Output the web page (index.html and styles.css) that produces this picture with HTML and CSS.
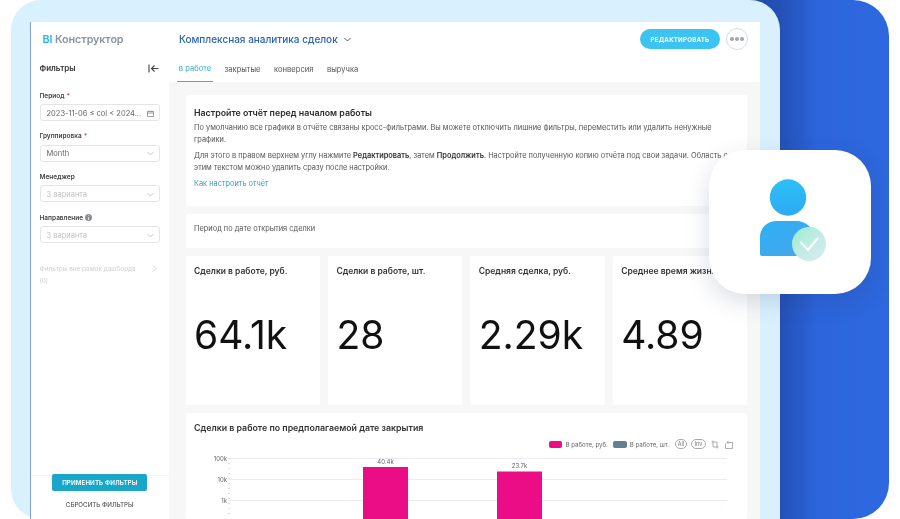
FILE: index.html
```html
<!DOCTYPE html>
<html lang="ru">
<head>
<meta charset="utf-8">
<title>BI Конструктор</title>
<link rel="stylesheet" href="styles.css">
</head>
<body>
<div class="stage">
  <div class="frame">
    <div class="app">
      <aside class="sidebar">
        <div class="sidebar-body">
          <div class="logo"><span class="logo-bi">BI</span> Конструктор</div>
          <div class="filters-head">
            <span>Фильтры</span>
            <svg class="collapse" viewBox="0 0 11 9" width="11" height="9"><path d="M1 .5v8M10.500 4.500H3.500M6.500 1.500l-3 3 3 3" fill="none" stroke="#444" stroke-width="1.100"/></svg>
          </div>
          <div class="fields">
            <div class="field">
              <div class="label">Период<span class="req">*</span></div>
              <div class="input"><span class="input-text">2023-11-06 ≤ col &lt; 2024...</span>
                <svg viewBox="0 0 7 7" width="7" height="7"><path d="M.5 1.500h6v5h-6zM.5 3h6M2 .5v1M5 .5v1" fill="none" stroke="#777" stroke-width=".7"/></svg></div>
            </div>
            <div class="field">
              <div class="label">Группировка<span class="req">*</span></div>
              <div class="input"><span class="input-text">Month</span>
                <svg viewBox="0 0 7 5" width="7" height="5"><path d="M.5 1l3 3 3-3" fill="none" stroke="#bbb" stroke-width=".8"/></svg></div>
            </div>
            <div class="field">
              <div class="label">Менеджер</div>
              <div class="input"><span class="input-text muted">3 варианта</span>
                <svg viewBox="0 0 7 5" width="7" height="5"><path d="M.5 1l3 3 3-3" fill="none" stroke="#bbb" stroke-width=".8"/></svg></div>
            </div>
            <div class="field">
              <div class="label">Направление <span class="info">i</span></div>
              <div class="input"><span class="input-text muted">3 варианта</span>
                <svg viewBox="0 0 7 5" width="7" height="5"><path d="M.5 1l3 3 3-3" fill="none" stroke="#bbb" stroke-width=".8"/></svg></div>
            </div>
          </div>
          <div class="outside">
            <span>Фильтры вне рамок дашборда (0)</span>
            <svg viewBox="0 0 5 7" width="5" height="7"><path d="M1 .5l3 3-3 3" fill="none" stroke="#c4c4c4" stroke-width=".8"/></svg>
          </div>
        </div>
        <div class="sidebar-foot">
          <div class="btn-apply">ПРИМЕНИТЬ ФИЛЬТРЫ</div>
          <div class="btn-reset">СБРОСИТЬ ФИЛЬТРЫ</div>
        </div>
      </aside>
      <main class="main">
        <header class="topbar">
          <div class="title">Комплексная аналитика сделок
            <svg viewBox="0 0 7 5" width="7" height="5"><path d="M.5 1l3 3 3-3" fill="none" stroke="#555" stroke-width="1"/></svg></div>
          <div class="actions">
            <div class="btn-edit">РЕДАКТИРОВАТЬ</div>
            <div class="btn-more"><i></i><i></i><i></i></div>
          </div>
        </header>
        <nav class="tabs">
          <span class="tab tab-active">в работе</span>
          <span class="tab">закрытые</span>
          <span class="tab">конверсия</span>
          <span class="tab">выручка</span>
        </nav>
        <div class="content">
          <section class="card intro">
            <h2>Настройте отчёт перед началом работы</h2>
            <p>По умолчанию все графики в отчёте связаны кросс-фильтрами. Вы можете отключить лишние фильтры, переместить или удалить ненужные графики.</p>
            <p>Для этого в правом верхнем углу нажмите <b>Редактировать</b>, затем <b>Продолжить</b>. Настройте полученную копию отчёта под свои задачи. Область с этим текстом можно удалить сразу после настройки.</p>
            <a class="intro-link">Как настроить отчёт</a>
          </section>
          <section class="card period">Период по дате открытия сделки</section>
          <section class="kpis">
            <div class="card kpi"><h3>Сделки в работе, руб.</h3><div class="kpi-value">64.1k</div></div>
            <div class="card kpi"><h3>Сделки в работе, шт.</h3><div class="kpi-value">28</div></div>
            <div class="card kpi"><h3>Средняя сделка, руб.</h3><div class="kpi-value">2.29k</div></div>
            <div class="card kpi"><h3>Среднее время жизни, дн.</h3><div class="kpi-value">4.89</div></div>
          </section>
          <section class="card chart">
            <h3>Сделки в работе по предполагаемой дате закрытия</h3>
            <div class="legend">
              <i class="swatch swatch-pink"></i><span>В работе, руб.</span>
              <i class="swatch swatch-slate"></i><span>В работе, шт.</span>
              <span class="pill pill-all">All</span><span class="pill pill-inv">Inv</span>
              <svg class="legend-icon" viewBox="0 0 8 9" width="8" height="9"><path d="M2 .5v6.500h5.500M.5 2h5.500v6.500" fill="none" stroke="#999" stroke-width=".8"/></svg>
              <svg class="legend-icon legend-icon-last" viewBox="0 0 8 9" width="8" height="9"><path d="M2 2.500h5.500v6H.5V3.500M3.500 .8L2 2.500l1.500 1.500" fill="none" stroke="#999" stroke-width=".8"/></svg>
            </div>
            <svg class="plot" viewBox="0 0 561 66" width="561" height="66">
              <g stroke="#e8ebf7" stroke-width="1">
                <path d="M44 5.500h497M44 26.500h497M44 47.500h497"/>
              </g>
              <path d="M43 5v60" stroke="#b5b8c4" stroke-width="1" stroke-dasharray="1 4"/>
              <g class="tick">
                <text x="41" y="8" text-anchor="end">100k</text>
                <text x="41" y="29" text-anchor="end">10k</text>
                <text x="41" y="50" text-anchor="end">1k</text>
              </g>
              <rect x="177" y="14" width="45" height="52" fill="#ea0d85"/>
              <rect x="311" y="18.500" width="45" height="48" fill="#ea0d85"/>
              <g class="tick">
                <text x="199.500" y="10.500" text-anchor="middle">40.4k</text>
                <text x="333.500" y="15" text-anchor="middle">23.7k</text>
              </g>
            </svg>
          </section>
        </div>
      </main>
    </div>
  </div>
  <div class="badge">
    <svg viewBox="0 0 70 78" width="70" height="78">
      <defs>
        <linearGradient id="hd" x1="0" y1="0" x2="0" y2="1"><stop offset="0" stop-color="#2cc0f7"/><stop offset="1" stop-color="#2ea9f3"/></linearGradient>
        <linearGradient id="bd" x1="0" y1="0" x2="1" y2="1"><stop offset="0" stop-color="#2cb0f5"/><stop offset="1" stop-color="#4aa5ea"/></linearGradient>
        <linearGradient id="ck" x1="0" y1="0" x2="1" y2="1"><stop offset="0" stop-color="#96ecce"/><stop offset=".55" stop-color="#c6ebe6"/><stop offset="1" stop-color="#d4ecf1"/></linearGradient>
      </defs>
      <circle cx="30" cy="18.500" r="18.200" fill="url(#hd)"/>
      <path d="M2 75V58C2 49 9 42 19 42H38C48 42 56 49 56 58V77H4a2 2 0 0 1-2-2z" fill="url(#bd)"/>
    </svg>
    <svg class="badge-check" viewBox="0 0 36 36" width="36" height="36">
      <circle cx="18" cy="18" r="17" fill="url(#ck)"/>
      <path d="M9.500 16l7.500 8 10-12" fill="none" stroke="#fff" stroke-width="2"/>
    </svg>
  </div>
</div>
</body>
</html>
```
FILE: styles.css
```css
* { box-sizing: border-box; }
html, body { margin: 0; padding: 0; background: #fff; }
body { font-family: Inter, "Liberation Sans", sans-serif; color: #333; }

.stage {
  position: relative;
  width: 900px;
  height: 519px;
  overflow: hidden;
  padding-left: 11px;
}
.stage::before {
  content: "";
  position: absolute;
  left: 700px;
  top: 0;
  width: 189px;
  height: 519px;
  border-radius: 0 36px 36px 0;
  background: linear-gradient(90deg, #1f47a8 0, #2350b5 42%, #2c65dc 62%, #2e68de 100%);
}

.frame {
  position: relative;
  width: 769px;
  height: 519px;
  padding: 22px 20px 0 19px;
  background: #d9f1ff;
  border-radius: 30px 30px 0 30px;
}
.app {
  display: flex;
  width: 730px;
  height: 497px;
  background: #fff;
  border-left: 1.500px solid #7f9bd8;
  overflow: hidden;
  filter: blur(.3px);
}

/* sidebar */
.sidebar {
  display: flex;
  flex-direction: column;
  flex: 0 0 137.500px;
  height: 100%;
  padding: 0 8.500px 0 8.500px;
}
.sidebar-body { flex: 1; margin: 0 -8.500px; padding: 0 8.500px; border-bottom: 1px solid #f5f5f5; }
.logo {
  height: 34px;
  padding: 11px 0 0 3px;
  font-size: 10.800px;
  line-height: 14px;
  font-weight: 600;
  letter-spacing: -.1px;
  color: #8b96a5;
}
.logo-bi { color: #27b5f5; }
.filters-head {
  display: flex;
  align-items: center;
  justify-content: space-between;
  height: 24px;
  padding-right: 1px;
  font-size: 8px;
  font-weight: 600;
  color: #333;
}
.fields { display: flex; flex-direction: column; gap: 9.700px; padding-top: 10px; }
.label {
  display: flex;
  align-items: center;
  gap: 2px;
  height: 10px;
  padding-top: 1px;
  margin-bottom: 4px;
  font-size: 6.500px;
  font-weight: 600;
  color: #444;
}
.req { color: #e04355; }
.info {
  display: inline-flex;
  align-items: center;
  justify-content: center;
  width: 7px;
  height: 7px;
  border-radius: 50%;
  background: #8b8f94;
  color: #fff;
  font-size: 5px;
}
.input {
  display: flex;
  align-items: center;
  justify-content: space-between;
  height: 17px;
  padding: 1px 5px 0 6px;
  border: 1px solid #e4e5e7;
  border-radius: 3px;
  background: #fff;
}
.input-text { font-size: 7.500px; color: #666; white-space: nowrap; }
.input-text.muted { color: #c2c2c2; }
.outside {
  display: flex;
  align-items: flex-start;
  justify-content: space-between;
  margin-top: 20px;
  padding-right: 3px;
  font-size: 6.400px;
  line-height: 12px;
  color: #cfcfcf;
}
.outside span { width: 100px; }
.outside svg { margin-top: 2px; }
.sidebar-foot {
  display: flex;
  flex-direction: column;
  align-items: center;
  flex: 0 0 45px;
  margin-top: -2px;
}
.btn-apply {
  display: flex;
  align-items: center;
  justify-content: center;
  width: 95px;
  height: 17px;
  border-radius: 2px;
  background: #1aa6c9;
  color: #fff;
  font-size: 6.200px;
  font-weight: 600;
  letter-spacing: .1px;
}
.btn-reset {
  margin-top: 10px;
  font-size: 6.200px;
  font-weight: 500;
  color: #555;
}

/* main */
.main { display: flex; flex-direction: column; flex: 1; min-width: 0; }
.topbar {
  display: flex;
  align-items: center;
  justify-content: space-between;
  height: 34px;
  padding: 0 12px 0 10.500px;
}
.title {
  display: flex;
  align-items: center;
  gap: 6px;
  font-size: 10px;
  font-weight: 500;
  color: #2a63ae;
}
.actions { display: flex; align-items: center; gap: 6px; }
.btn-edit {
  display: flex;
  align-items: center;
  justify-content: center;
  width: 80px;
  height: 20px;
  border-radius: 10px;
  background: #3bc3f1;
  color: #fff;
  font-size: 6.200px;
  font-weight: 700;
  letter-spacing: .2px;
}
.btn-more {
  display: flex;
  align-items: center;
  justify-content: center;
  gap: 1.500px;
  width: 22px;
  height: 22px;
  border: 1px solid #d9dde3;
  border-radius: 50%;
  background: #fff;
}
.btn-more i { width: 3.500px; height: 3.500px; border-radius: 50%; background: #a4a9ae; }
.tabs {
  display: flex;
  align-items: stretch;
  gap: 13.500px;
  height: 26px;
  padding-left: 8.500px;
  font-size: 7.600px;
}
.tab {
  display: flex;
  align-items: center;
  color: #555;
  white-space: nowrap;
}
.tab-active {
  width: 36px;
  margin-right: -2px;
  justify-content: center;
  color: #36a9d2;
  border-bottom: 1.500px solid #8b90b6;
}
.content {
  flex: 1;
  display: flex;
  flex-direction: column;
  gap: 8px;
  min-height: 0;
  padding: 13px 13px 0 17px;
  background: #f7f7f7;
}
.card { background: #fff; border-radius: 2px; }
.intro { flex: 0 0 111px; padding: 12px 8.500px 0; font-size: 7.400px; line-height: 12px; color: #555; }
.intro h2 { margin: 0 0 4px; font-size: 8.800px; line-height: 11px; font-weight: 600; color: #2b2b2b; }
.intro p { margin: 0 0 4px; max-width: 545px; }
.intro b { font-weight: 600; color: #333; }
.intro-link { display: block; color: #3b9ab8; }
.period {
  flex: 0 0 34px;
  padding: 8.500px 8.500px 0;
  font-size: 7.400px;
  line-height: 12px;
  color: #555;
}
.kpis { flex: 0 0 149px; display: grid; grid-template-columns: repeat(4, 1fr); gap: 8px; }
.kpi { padding: 10px 8.500px 0; overflow: hidden; }
.kpi h3 { margin: 0; font-size: 8.500px; line-height: 11px; font-weight: 600; color: #333; white-space: nowrap; }
.kpi-value { margin-top: 35px; font-size: 39px; line-height: 46px; font-weight: 400; color: #111; }
.chart { flex: 1; min-height: 0; padding: 9px 0 0; overflow: hidden; }
.chart h3 { margin: 0 8.500px; font-size: 8.800px; line-height: 12px; font-weight: 600; color: #333; }
.legend {
  display: flex;
  align-items: center;
  justify-content: flex-end;
  gap: 3px;
  height: 12px;
  margin: 4px 14px 0 0;
  font-size: 6.100px;
  color: #666;
}
.swatch { width: 13px; height: 7px; border-radius: 2px; }
.swatch-pink { background: #ea0d85; }
.swatch-slate { width: 14px; background: #64808f; margin-left: 2px; }
.pill {
  height: 10px;
  line-height: 8.500px;
  text-align: center;
  border: 1px solid #aaa;
  border-radius: 5px;
  color: #777;
  font-size: 5.500px;
}
.pill-all { width: 12px; margin-left: 3px; }
.pill-inv { width: 15px; margin-left: 1px; }
.legend-icon { margin-left: 2px; }
.legend-icon-last { margin-left: 3px; }
.plot { display: block; margin-top: 3px; }
.tick text { font-family: Inter, "Liberation Sans", sans-serif; font-size: 6px; fill: #666; }

/* floating badge */
.badge {
  position: absolute;
  left: 709px;
  top: 150px;
  width: 162px;
  height: 144px;
  padding: 29px 0 0 49px;
  border-radius: 36px;
  background: #fff;
  box-shadow: 0 8px 24px rgba(30, 50, 90, .16);
}
.badge-check {
  position: absolute;
  left: 82px;
  top: 76px;
}
```
